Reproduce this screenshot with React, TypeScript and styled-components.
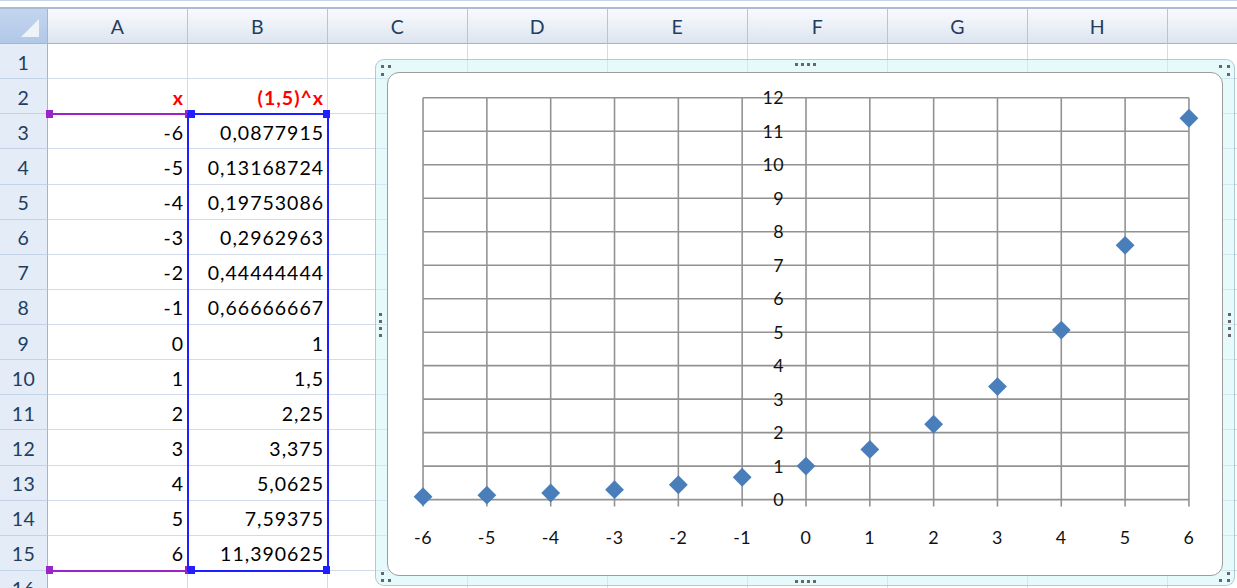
import { Fragment } from 'react'
import styled, { createGlobalStyle } from 'styled-components'

const GlobalStyle = createGlobalStyle`
  html, body {
    margin: 0;
    padding: 0;
    background: #fff;
  }
  body {
    font-family: Lato, 'Open Sans', sans-serif;
    overflow: hidden;
  }
`

const ROW_HEAD_W = 48
const COL_W = 140
const HEAD_TOP = 9
const HEAD_H = 35
const ROW_H = 35.13

const Window = styled.div`
  position: relative;
  width: 1237px;
  height: 588px;
  overflow: hidden;
  background: #fff;
`

const TopStrip = styled.div`
  height: ${HEAD_TOP}px;
  box-sizing: border-box;
  border-top: 1px solid #c6d3e5;
  border-bottom: 2px solid #a9bcd5;
`

const Sheet = styled.div`
  display: grid;
  grid-template-columns: ${ROW_HEAD_W}px repeat(9, ${COL_W}px);
  grid-template-rows: ${HEAD_H}px;
  grid-auto-rows: ${ROW_H}px;
`

const Corner = styled.div`
  position: relative;
  box-sizing: border-box;
  background: linear-gradient(#c3d5ee, #b2c8e8);
  border-right: 1px solid #9eb6ce;
  border-bottom: 1px solid #9eb6ce;
  &::after {
    content: '';
    position: absolute;
    right: 8px;
    bottom: 6px;
    border-left: 18px solid transparent;
    border-bottom: 18px solid #eef3fa;
  }
`

const HeaderBase = styled.div`
  box-sizing: border-box;
  display: flex;
  align-items: center;
  justify-content: center;
  color: #233d5f;
  font-size: 19.5px;
  letter-spacing: 0.5px;
`

const ColHeader = styled(HeaderBase)`
  background: linear-gradient(#f9fafd, #eaeff6 55%, #dce4ef);
  border-right: 1px solid #b3c5db;
  border-bottom: 1px solid #9eb6ce;
`

const RowHeader = styled(HeaderBase)`
  background: #e4ecf7;
  border-right: 1px solid #9eb6ce;
  border-bottom: 1px solid #c5d3e6;
  padding-top: 2px;
`

const Cell = styled.div<{ $head?: boolean }>`
  box-sizing: border-box;
  display: flex;
  align-items: center;
  justify-content: flex-end;
  padding: 2px 3px 0 0;
  border-right: 1px solid #d4dbe8;
  border-bottom: 1px solid #d4dbe8;
  font-size: 19.5px;
  letter-spacing: 1px;
  white-space: nowrap;
  color: ${(p) => (p.$head ? '#ff0000' : '#000')};
  font-weight: ${(p) => (p.$head ? 700 : 400)};
`

/* chart source ranges drawn over the cells: column index, first and last row */
const RangeBox = styled.div<{ $color: string; $col: number; $from: number; $to: number; $sides: string }>`
  position: absolute;
  box-sizing: border-box;
  left: ${(p) => ROW_HEAD_W + p.$col * COL_W - 1}px;
  top: ${(p) => HEAD_TOP + HEAD_H + (p.$from - 1) * ROW_H - 1}px;
  width: ${COL_W + 2}px;
  height: ${(p) => (p.$to - p.$from + 1) * ROW_H + 2}px;
  border-style: solid;
  border-color: ${(p) => p.$color};
  border-width: ${(p) => p.$sides};
  pointer-events: none;
`

const RangeHandle = styled.div<{ $color: string; $corner: 'tl' | 'tr' | 'bl' | 'br' }>`
  position: absolute;
  width: 7px;
  height: 8px;
  background: ${(p) => p.$color};
  ${(p) => (p.$corner[0] === 't' ? 'top: -5px;' : 'bottom: -4px;')}
  ${(p) => (p.$corner[1] === 'l' ? 'left: -1px;' : 'right: -3px;')}
`

const ChartFrame = styled.div`
  position: absolute;
  left: 375px;
  top: 59px;
  width: 860px;
  height: 527px;
  box-sizing: border-box;
  display: flex;
  padding: 12px 11px 9px 11px;
  background: rgba(205, 246, 250, 0.5);
  border: 1px solid rgba(125, 170, 176, 0.55);
  border-radius: 9px;
`

const PlotArea = styled.div`
  flex: 1;
  background: #fff;
  border: 1px solid #9c9c9c;
  border-radius: 12px;
  overflow: hidden;
`

const DOT = '#676767'
const handleSpots = {
  tl: `left: 5px; top: 5px; box-shadow: 7px 0 ${DOT}, 0 8px ${DOT};`,
  tr: `right: 4px; top: 5px; box-shadow: -8px 0 ${DOT}, 0 8px ${DOT};`,
  bl: `left: 5px; bottom: 10px; box-shadow: 0 7px ${DOT}, 7px 7px ${DOT};`,
  br: `right: 4px; bottom: 3px; box-shadow: -8px 0 ${DOT}, 0 -7px ${DOT};`,
  t: `left: 419px; top: 3px; box-shadow: 6px 0 ${DOT}, 12px 0 ${DOT}, 18px 0 ${DOT};`,
  b: `left: 419px; bottom: 2px; box-shadow: 6px 0 ${DOT}, 12px 0 ${DOT}, 18px 0 ${DOT};`,
  l: `left: 3px; top: 253px; box-shadow: 0 7px ${DOT}, 0 14px ${DOT}, 0 21px ${DOT};`,
  r: `right: 3px; top: 253px; box-shadow: 0 7px ${DOT}, 0 14px ${DOT}, 0 21px ${DOT};`,
}

const FrameHandle = styled.div<{ $at: keyof typeof handleSpots }>`
  position: absolute;
  width: 3px;
  height: 3px;
  background: ${DOT};
  ${(p) => handleSpots[p.$at]}
`

const AxisText = styled.text`
  font-family: Lato, 'Open Sans', sans-serif;
  font-size: 18px;
  letter-spacing: 0.5px;
  fill: #111;
`

const columns = ['A', 'B', 'C', 'D', 'E', 'F', 'G', 'H', '']
const xs = [-6, -5, -4, -3, -2, -1, 0, 1, 2, 3, 4, 5, 6]
const ys = [
  '0,0877915',
  '0,13168724',
  '0,19753086',
  '0,2962963',
  '0,44444444',
  '0,66666667',
  '1',
  '1,5',
  '2,25',
  '3,375',
  '5,0625',
  '7,59375',
  '11,390625',
]

function cellText(row: number, col: number) {
  if (row === 2 && col === 0) return 'x'
  if (row === 2 && col === 1) return '(1,5)^x'
  if (row >= 3 && row <= 15) {
    if (col === 0) return String(xs[row - 3])
    if (col === 1) return ys[row - 3]
  }
  return ''
}

const PLOT_W = 838
const PLOT_H = 506
const GX0 = 34
const GX1 = 806
const GY0 = 25
const GY1 = 430
const stepX = (GX1 - GX0) / 12
const stepY = (GY1 - GY0) / 12
const gx = (x: number) => GX0 + (x + 6) * stepX
const gy = (v: number) => GY1 - v * stepY

function Chart() {
  const ticks = Array.from({ length: 13 }, (_, i) => i)
  return (
    <svg width="100%" height="100%" viewBox={`0 0 ${PLOT_W} ${PLOT_H}`}>
      {ticks.map((i) => (
        <line
          key={'v' + i}
          x1={GX0 + i * stepX}
          x2={GX0 + i * stepX}
          y1={GY0}
          y2={GY1 + 7}
          stroke="#929292"
          strokeWidth={1.6}
        />
      ))}
      {ticks.map((i) => (
        <line
          key={'h' + i}
          x1={GX0}
          x2={GX1}
          y1={GY0 + i * stepY}
          y2={GY0 + i * stepY}
          stroke="#929292"
          strokeWidth={1.6}
        />
      ))}
      {ticks.map((v) => (
        <AxisText key={'yl' + v} x={398} y={gy(v) + 6.5} textAnchor="end">
          {v}
        </AxisText>
      ))}
      {xs.map((x) => (
        <AxisText key={'xl' + x} x={gx(x)} y={474.5} textAnchor="middle">
          {x}
        </AxisText>
      ))}
      {xs.map((x) => {
        const cx = gx(x)
        const cy = gy(Math.pow(1.5, x))
        return (
          <path
            key={'p' + x}
            d={`M${cx} ${cy - 9.5}L${cx + 9.5} ${cy}L${cx} ${cy + 9.5}L${cx - 9.5} ${cy}Z`}
            fill="#4a7ebb"
          />
        )
      })}
    </svg>
  )
}

const corners = ['tl', 'tr', 'bl', 'br'] as const
const frameSpots = Object.keys(handleSpots) as (keyof typeof handleSpots)[]

export default function App() {
  const rows = Array.from({ length: 16 }, (_, i) => i + 1)
  return (
    <Window>
      <GlobalStyle />
      <TopStrip />
      <Sheet>
        <Corner />
        {columns.map((c, i) => (
          <ColHeader key={'c' + i}>{c}</ColHeader>
        ))}
        {rows.map((r) => (
          <Fragment key={'r' + r}>
            <RowHeader>{r}</RowHeader>
            {columns.map((_, ci) => (
              <Cell key={ci} $head={r === 2}>
                {cellText(r, ci)}
              </Cell>
            ))}
          </Fragment>
        ))}
      </Sheet>

      <RangeBox $color="#9b24c9" $col={0} $from={3} $to={15} $sides="2px 0 2px 0">
        {corners.map((k) => (
          <RangeHandle key={k} $color="#9b24c9" $corner={k} />
        ))}
      </RangeBox>
      <RangeBox $color="#1f1fff" $col={1} $from={3} $to={15} $sides="2px">
        {corners.map((k) => (
          <RangeHandle key={k} $color="#1f1fff" $corner={k} />
        ))}
      </RangeBox>

      <ChartFrame>
        {frameSpots.map((k) => (
          <FrameHandle key={k} $at={k} />
        ))}
        <PlotArea>
          <Chart />
        </PlotArea>
      </ChartFrame>
    </Window>
  )
}
